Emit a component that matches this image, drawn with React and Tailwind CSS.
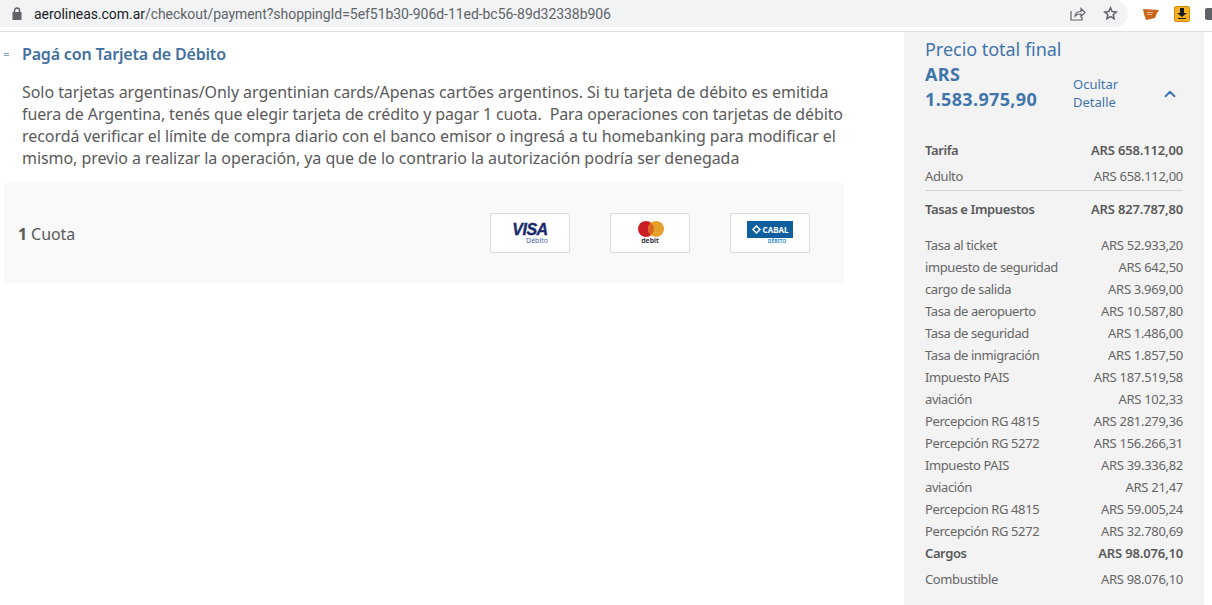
import React from 'react';
import { ChevronUp } from 'lucide-react';

const rows = [
  ['Tasa al ticket', 'ARS 52.933,20'],
  ['impuesto de seguridad', 'ARS 642,50'],
  ['cargo de salida', 'ARS 3.969,00'],
  ['Tasa de aeropuerto', 'ARS 10.587,80'],
  ['Tasa de seguridad', 'ARS 1.486,00'],
  ['Tasa de inmigración', 'ARS 1.857,50'],
  ['Impuesto PAIS', 'ARS 187.519,58'],
  ['aviación', 'ARS 102,33'],
  ['Percepcion RG 4815', 'ARS 281.279,36'],
  ['Percepción RG 5272', 'ARS 156.266,31'],
  ['Impuesto PAIS', 'ARS 39.336,82'],
  ['aviación', 'ARS 21,47'],
  ['Percepcion RG 4815', 'ARS 59.005,24'],
  ['Percepción RG 5272', 'ARS 32.780,69'],
];

function Row({ label, value, bold, className = '' }) {
  return (
    <div className={`flex items-center justify-between h-[22px] text-[13px] ${bold ? 'font-semibold text-[#595959]' : 'text-[#666666]'} ${className}`}>
      <span className="tracking-[-0.4px]">{label}</span>
      <span className={bold ? 'tracking-[-0.16px]' : 'tracking-[-0.3px]'}>{value}</span>
    </div>
  );
}

function CardBox({ children }) {
  return (
    <div className="w-20 h-10 bg-white border border-[#dcdcdc] rounded-[2px] flex flex-col items-center justify-center">
      {children}
    </div>
  );
}

export default function App() {
  return (
    <div className="w-[1212px] h-[605px] overflow-hidden bg-white font-['Noto_Sans',sans-serif]">
      {/* Browser bar */}
      <div className="h-[32px] border-b border-[#dedfe0] flex items-start">
        <div className="w-[1128px] h-[27px] bg-[#f1f3f4] rounded-r-[14px] flex items-center pl-[11px] shrink-0">
          <svg width="12" height="13" viewBox="0 0 12 13" className="text-[#5f6368]">
            <path fill="currentColor" d="M1.5 5h9v8h-9z" />
            <path fill="none" stroke="currentColor" strokeWidth="1.5" d="M3.5 5V3.5a2.5 2.5 0 0 1 5 0V5" />
          </svg>
          <div className="ml-[11px] text-[14px] leading-none tracking-[-0.05px] whitespace-nowrap font-['Roboto',sans-serif] text-[#5f6368]">
            <span className="text-[#202124]">aerolineas.com.ar</span>/checkout/payment?shoppingId=5ef51b30-906d-11ed-bc56-89d32338b906
          </div>
          <div className="ml-auto flex items-center gap-[17px] pr-[10px]">
            <svg width="16" height="15" viewBox="0 0 16 15" fill="none" stroke="#5f6368" strokeWidth="1.2">
              <path d="M1 5v9h11v-3" />
              <path d="M5 10c.5-3 3-4.500 6-4.500V2.500l4 4-4 4V8c-2.500 0-4.500.5-6 2z" />
            </svg>
            <svg width="15" height="15" viewBox="0 0 15 15" fill="none" stroke="#5f6368" strokeWidth="1.5">
              <path d="M7.500 1.800l1.700 3.800 4.100.4-3.100 2.700.9 4-3.600-2.100-3.600 2.100.9-4L1.700 6l4.100-.4z" />
            </svg>
          </div>
        </div>
        <div className="flex items-center h-[27px] ml-[15px]">
          <svg width="16" height="12" viewBox="0 0 16 12">
            <path fill="#c8651b" d="M0 1l16 1-2 3-2 5-9 2-2-6z" />
            <path fill="#eeb48a" d="M4 4h6v1H4zM4 6h5v1H4z" />
          </svg>
          <div className="ml-[15px] w-4 h-4 rounded-[2px] bg-[#f5b120] border border-[#d08a10] flex items-center justify-center">
            <svg width="10" height="11" viewBox="0 0 10 11">
              <path fill="#1a1a1a" d="M3 0h4v5h3l-5 4-5-4h3zM1 10h8v1H1z" />
            </svg>
          </div>
          <div className="ml-[15px] w-[8px] h-[12px] bg-[#5f6368] rounded-l-[2px]" />
        </div>
      </div>

      <div className="flex h-[573px]">
        {/* Payment column */}
        <div className="w-[904px] shrink-0 pl-1">
          <div className="flex items-center h-[44px]">
            <span className="w-[5px] h-[3px] border-y border-[#7fa6c9]" />
            <h2 className="ml-[13px] text-[16px] font-semibold text-[#42709f] tracking-[-0.18px]">Pagá con Tarjeta de Débito</h2>
          </div>
          <p className="ml-[18px] w-[830px] mt-[5px] text-[16px] leading-[22px] tracking-[-0.06px] text-[#5a5a5a] whitespace-pre">
            {'Solo tarjetas argentinas/Only argentinian cards/Apenas cartões argentinos. Si tu tarjeta de débito es emitida\n'}
            <span className="tracking-[-0.12px]">{'fuera de Argentina, tenés que elegir tarjeta de crédito y pagar 1 cuota.  Para operaciones con tarjetas de débito\n'}</span>
            {'recordá verificar el límite de compra diario con el banco emisor o ingresá a tu homebanking para modificar el\nmismo, previo a realizar la operación, ya que de lo contrario la autorización podría ser denegada'}
          </p>
          <div className="mt-[14px] w-[840px] h-[100px] bg-[#f9f9f9] flex items-center pl-[14px] pr-[34px]">
            <div className="text-[16px] tracking-[-0.1px] text-[#5a5a5a] mt-[2px]"><span className="font-bold">1</span> Cuota</div>
            <div className="ml-auto flex gap-10">
              <CardBox>
                <span className="text-[16px] leading-[15px] font-bold italic text-[#1a2b6d] font-['Liberation_Sans',sans-serif] tracking-[-0.5px] [-webkit-text-stroke:0.4px_#1a2b6d]">VISA</span>
                <span className="text-[7px] leading-[8px] text-[#4a6aa0] ml-[14px]">Débito</span>
              </CardBox>
              <CardBox>
                <svg width="26" height="16" viewBox="0 0 26 16" className="ml-[2px]">
                  <circle cx="8" cy="8" r="8" fill="#cc1f25" />
                  <circle cx="18" cy="8" r="8" fill="#e6a12c" />
                  <path fill="#d9651f" d="M13 1.800a8 8 0 0 1 0 12.400a8 8 0 0 1 0-12.400z" />
                </svg>
                <span className="text-[7px] leading-[8px] font-semibold text-[#222222]">debit</span>
              </CardBox>
              <CardBox>
                <div className="w-[46px] h-[17px] bg-[#0e5f9e] flex items-center justify-center gap-[2px]">
                  <svg width="9" height="9" viewBox="0 0 9 9" fill="none" stroke="#ffffff" strokeWidth="1.500">
                    <path d="M4.500 1L8 4.500 4.500 8 1 4.500z" />
                  </svg>
                  <span className="text-[8px] leading-none font-bold text-white">CABAL</span>
                </div>
                <span className="text-[5px] leading-[7px] font-bold text-[#3a8fc4] ml-[14px]">DÉBITO</span>
              </CardBox>
            </div>
          </div>
        </div>

        {/* Price summary */}
        <div className="w-[300px] shrink-0 bg-[#f3f3f3] px-[21px]">
          <div className="text-[18px] leading-[24px] mt-[5px] text-[#3f75ab] tracking-[-0.03px]">Precio total final</div>
          <div className="flex items-center h-[50px] mt-[1px]">
            <div className="w-[148px] text-[18px] leading-[25px] font-bold text-[#3f75ab] tracking-[0.35px]">ARS<br />1.583.975,90</div>
            <div className="text-[13px] leading-[18px] text-[#3f75ab] mt-[11px]">Ocultar<br />Detalle</div>
            <ChevronUp size={18} strokeWidth={2.500} className="ml-[43px] mt-[13px] text-[#3f75ab]" />
          </div>
          <Row bold label="Tarifa" value="ARS 658.112,00" className="mt-[28px]" />
          <Row label="Adulto" value="ARS 658.112,00" className="mt-1" />
          <div className="border-t border-[#d4d4d4] mt-[2px]" />
          <Row bold label="Tasas e Impuestos" value="ARS 827.787,80" className="mt-[8px] mb-[14px]" />
          {rows.map((r, i) => <Row key={i} label={r[0]} value={r[1]} />)}
          <Row bold label="Cargos" value="ARS 98.076,10" />
          <Row label="Combustible" value="ARS 98.076,10" className="mt-1" />
        </div>
      </div>
    </div>
  );
}
